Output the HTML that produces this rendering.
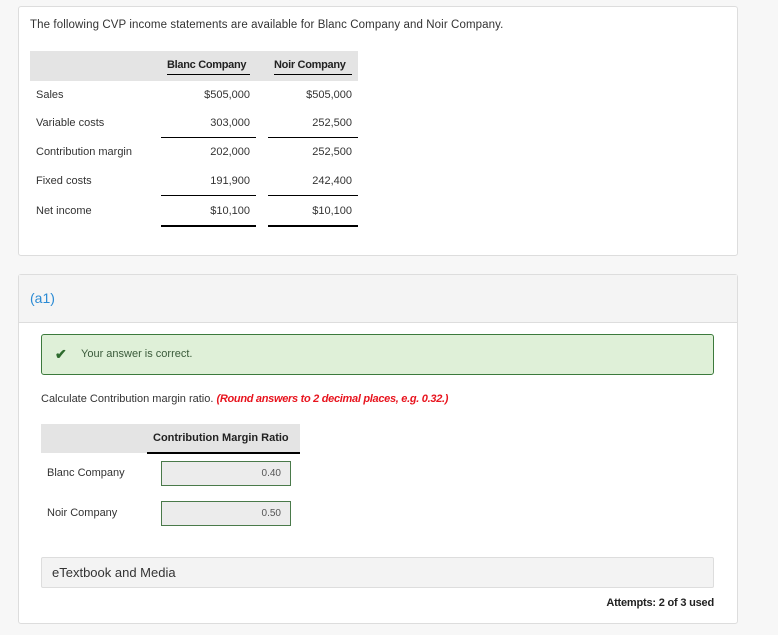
<!DOCTYPE html>
<html><head><style>
*{box-sizing:border-box}
body{margin:0;background:#f7f7f7;font-family:"Liberation Sans",sans-serif;color:#333;width:778px;height:635px;position:relative;overflow:hidden}
.a{position:absolute;white-space:nowrap}
.card{position:absolute;background:#fff;border:1px solid #ddd;border-radius:3px}
.s{font-size:11px;letter-spacing:0}
.r{text-align:right}
.line{position:absolute;height:1px;background:#000}
</style></head><body>
<div class="card" style="left:18px;top:6px;width:720px;height:250px"></div>
<div class="a s" style="left:30px;top:19px;font-size:11.5px;letter-spacing:0.1px">The following CVP income statements are available for Blanc Company and Noir Company.</div>
<div class="a" style="left:30px;top:51px;width:328px;height:30px;background:#e4e4e4"></div>
<div class="a s" style="left:167px;top:59px;font-weight:bold;color:#222;letter-spacing:-0.3px">Blanc Company</div>
<div class="line" style="left:167px;top:74px;width:83px"></div>
<div class="a s" style="left:274px;top:59px;font-weight:bold;color:#222;letter-spacing:-0.3px">Noir Company</div>
<div class="line" style="left:274px;top:74px;width:78px"></div>
<div class="a s" style="left:36px;top:89px">Sales</div>
<div class="a s" style="left:36px;top:117px">Variable costs</div>
<div class="a s" style="left:36px;top:146px">Contribution margin</div>
<div class="a s" style="left:36px;top:175px">Fixed costs</div>
<div class="a s" style="left:36px;top:205px">Net income</div>
<div class="a s r" style="left:160px;width:90px;top:89px">$505,000</div>
<div class="a s r" style="left:160px;width:90px;top:117px">303,000</div>
<div class="a s r" style="left:160px;width:90px;top:146px">202,000</div>
<div class="a s r" style="left:160px;width:90px;top:175px">191,900</div>
<div class="a s r" style="left:160px;width:90px;top:205px">$10,100</div>
<div class="a s r" style="left:260px;width:92px;top:89px">$505,000</div>
<div class="a s r" style="left:260px;width:92px;top:117px">252,500</div>
<div class="a s r" style="left:260px;width:92px;top:146px">252,500</div>
<div class="a s r" style="left:260px;width:92px;top:175px">242,400</div>
<div class="a s r" style="left:260px;width:92px;top:205px">$10,100</div>
<div class="line" style="left:161px;top:137px;width:95px"></div>
<div class="line" style="left:268px;top:137px;width:90px"></div>
<div class="line" style="left:161px;top:195px;width:95px"></div>
<div class="line" style="left:268px;top:195px;width:90px"></div>
<div class="line" style="left:161px;top:225px;width:95px;height:2px"></div>
<div class="line" style="left:268px;top:225px;width:90px;height:2px"></div>

<div class="card" style="left:18px;top:274px;width:720px;height:350px"></div>
<div class="a" style="left:19px;top:275px;width:718px;height:48px;background:#f4f4f4;border-bottom:1px solid #ddd"></div>
<div class="a" style="left:30px;top:290px;font-size:14px;color:#2a8ad4">(a1)</div>
<div class="a" style="left:41px;top:334px;width:673px;height:41px;background:#dff0d8;border:1px solid #3c7a3c;border-radius:3px"></div>
<div class="a" style="left:55px;top:346px;color:#2e6b2e;font-size:14px;font-weight:bold">✔</div>
<div class="a s" style="left:81px;top:348px;color:#3a5a3a">Your answer is correct.</div>
<div class="a s" style="left:41px;top:393px">Calculate Contribution margin ratio. <span style="color:#e8141e;font-weight:bold;font-style:italic;letter-spacing:-0.3px">(Round answers to 2 decimal places, e.g. 0.32.)</span></div>
<div class="a" style="left:41px;top:424px;width:259px;height:29px;background:#e4e4e4"></div>
<div class="a s" style="left:153px;top:432px;font-weight:bold;color:#222">Contribution Margin Ratio</div>
<div class="line" style="left:147px;top:452px;width:153px;height:2px"></div>
<div class="a s" style="left:47px;top:467px">Blanc Company</div>
<div class="a s" style="left:47px;top:507px">Noir Company</div>
<div class="a s r" style="left:161px;top:461px;width:130px;height:25px;line-height:23px;background:#ececec;border:1px solid #4a7a4a;padding-right:9px;font-size:10px;color:#555">0.40</div>
<div class="a s r" style="left:161px;top:501px;width:130px;height:25px;line-height:23px;background:#ececec;border:1px solid #4a7a4a;padding-right:9px;font-size:10px;color:#555">0.50</div>
<div class="a" style="left:41px;top:557px;width:673px;height:31px;background:#f3f3f3;border:1px solid #ddd;border-radius:2px"></div>
<div class="a" style="left:52px;top:565px;font-size:13px;color:#333">eTextbook and Media</div>
<div class="a s r" style="left:560px;width:154px;top:597px;font-weight:bold;color:#222;letter-spacing:-0.2px">Attempts: 2 of 3 used</div>
</body></html>
